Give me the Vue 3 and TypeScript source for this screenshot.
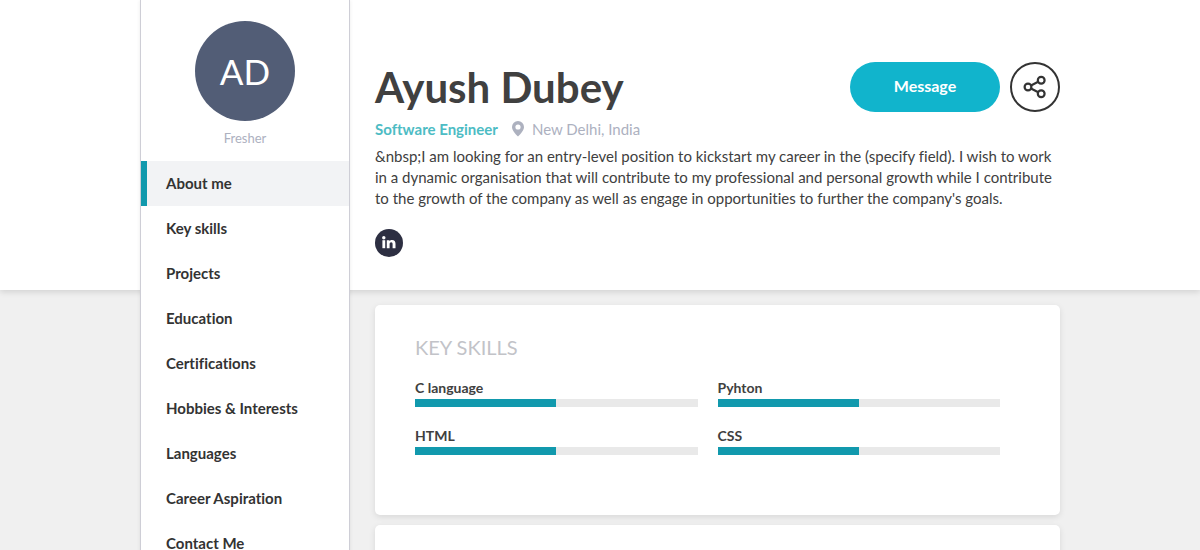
<script setup lang="ts">
import { ref } from 'vue'

interface Section {
  id: string
  label: string
}

interface Skill {
  name: string
  level: number
}

const sections: Section[] = [
  { id: 'about', label: 'About me' },
  { id: 'skills', label: 'Key skills' },
  { id: 'projects', label: 'Projects' },
  { id: 'education', label: 'Education' },
  { id: 'certifications', label: 'Certifications' },
  { id: 'hobbies', label: 'Hobbies & Interests' },
  { id: 'languages', label: 'Languages' },
  { id: 'aspiration', label: 'Career Aspiration' },
  { id: 'contact', label: 'Contact Me' },
]

const skills: Skill[] = [
  { name: 'C language', level: 50 },
  { name: 'Pyhton', level: 50 },
  { name: 'HTML', level: 50 },
  { name: 'CSS', level: 50 },
]

const summary =
  "&nbsp;I am looking for an entry-level position to kickstart my career in the (specify field). I wish to work in a dynamic organisation that will contribute to my professional and personal growth while I contribute to the growth of the company as well as engage in opportunities to further the company's goals."

const active = ref('about')
</script>

<template>
  <div class="page">
    <div class="band"></div>

    <aside class="sidebar">
      <div class="avatar">AD</div>
      <p class="status">Fresher</p>
      <nav>
        <a
          v-for="s in sections"
          :key="s.id"
          :href="'#' + s.id"
          class="nav-link"
          :class="{ active: active === s.id }"
          @click="active = s.id"
          >{{ s.label }}</a
        >
      </nav>
    </aside>

    <header id="about" class="hero">
      <div class="title-row">
        <h1>Ayush Dubey</h1>
        <div class="actions">
          <button type="button" class="message">Message</button>
          <button type="button" class="share" aria-label="Share profile">
            <svg width="24" height="24" viewBox="0 0 24 24" fill="none" stroke="currentColor" stroke-width="2.200">
              <circle cx="5" cy="12" r="3.400" />
              <circle cx="18.200" cy="5.200" r="3.400" />
              <circle cx="18.200" cy="18.800" r="3.400" />
              <path d="M8 10.400 15.200 6.800M8 13.600l7.200 3.600" />
            </svg>
          </button>
        </div>
      </div>
      <div class="meta">
        <span class="role">Software Engineer</span>
        <svg class="pin" width="12" height="16" viewBox="0 0 12 16" aria-hidden="true">
          <path
            fill="currentColor"
            fill-rule="evenodd"
            d="M6 0a6 6 0 0 1 6 6c0 3.400-3.400 7-6 9.500C3.400 13 0 9.400 0 6a6 6 0 0 1 6-6Zm0 3.400a2.600 2.600 0 1 0 0 5.200 2.600 2.600 0 0 0 0-5.200Z"
          />
        </svg>
        <span>New Delhi, India</span>
      </div>
      <p class="summary">{{ summary }}</p>
      <a href="#linkedin" class="linkedin" aria-label="LinkedIn">
        <svg width="28" height="28" viewBox="0 0 28 28">
          <circle cx="14" cy="14" r="14" fill="#2d2f42" />
          <g fill="#fff">
            <circle cx="8.800" cy="8.800" r="1.700" />
            <rect x="7.400" y="11.200" width="2.800" height="8" />
            <path
              d="M11.800 11.200h2.700v1.100c.5-.8 1.400-1.300 2.600-1.300 2.400 0 3.400 1.400 3.400 3.800v4.400h-2.900v-4c0-1.200-.4-1.900-1.400-1.900s-1.600.8-1.600 2v3.900h-2.800Z"
            />
          </g>
        </svg>
      </a>
    </header>

    <main class="content">
      <section id="skills" class="card">
        <h2>KEY SKILLS</h2>
        <ul class="skills">
          <li v-for="s in skills" :key="s.name">
            <span class="skill-name">{{ s.name }}</span>
            <div class="track" role="img" :aria-label="s.name + ' ' + s.level + '%'">
              <div class="fill" :style="{ width: s.level + '%' }"></div>
            </div>
          </li>
        </ul>
      </section>
      <section id="projects" class="card"></section>
    </main>
  </div>
</template>

<style>
body {
  background: #f0f0f0;
}
</style>

<style scoped>
.page,
.page * {
  box-sizing: border-box;
}

.page {
  display: grid;
  grid-template-columns: 1fr 210px minmax(0, 710px) 1fr;
  grid-template-rows: auto 1fr;
  min-height: 100vh;
  font-family: Lato, 'Liberation Sans', sans-serif;
  font-size: 15px;
  font-variant-ligatures: none;
  color: #404040;
}

h1,
h2,
p,
ul {
  margin: 0;
  padding: 0;
}

.band {
  grid-column: 1 / -1;
  grid-row: 1;
  background: #fff;
  box-shadow: 0 2px 6px rgba(0, 0, 0, 0.13);
}

.sidebar {
  grid-column: 2;
  grid-row: 1 / 3;
  z-index: 1;
  padding-top: 21px;
  background: #fff;
  border: 1px solid #ceced6;
  border-width: 0 1px;
  box-shadow: 0 0 4px rgba(0, 0, 0, 0.08);
}

.avatar {
  display: flex;
  align-items: center;
  justify-content: center;
  width: 100px;
  height: 100px;
  margin: 0 auto;
  border-radius: 50%;
  background: #525d76;
  color: #fff;
  font-size: 35px;
}

.status {
  padding: 7px 0 13px;
  text-align: center;
  font-size: 13px;
  line-height: 20px;
  color: #adb1bf;
}

.nav-link {
  display: block;
  padding-left: 19px;
  border-left: 6px solid transparent;
  line-height: 45px;
  font-weight: 700;
  color: #333;
  text-decoration: none;
}

.nav-link.active {
  border-left-color: #1199ad;
  background: #f2f3f5;
}

.hero {
  grid-column: 3;
  grid-row: 1;
  padding: 62px 0 33px 25px;
}

.title-row {
  display: flex;
  align-items: center;
  justify-content: space-between;
}

h1 {
  font-size: 42px;
  line-height: 50px;
  font-weight: 700;
}

.actions {
  display: flex;
  gap: 10px;
}

.message {
  width: 150px;
  height: 50px;
  padding: 0 0 3px;
  border: 0;
  border-radius: 25px;
  background: #11b4cc;
  color: #fff;
  font: inherit;
  font-size: 16px;
  font-weight: 700;
  cursor: pointer;
}

.share {
  display: flex;
  align-items: center;
  justify-content: center;
  width: 50px;
  height: 50px;
  padding: 0;
  border: 2px solid #333;
  border-radius: 50%;
  background: #fff;
  color: #333;
  cursor: pointer;
}

.meta {
  display: flex;
  align-items: center;
  margin-top: 7px;
  line-height: 20px;
  color: #adb1bf;
}

.role {
  font-weight: 700;
  color: #4dbcc4;
}

.pin {
  margin: 0 8px 0 14px;
}

.summary {
  margin-top: 7px;
  line-height: 21px;
}

.linkedin {
  display: block;
  width: 28px;
  height: 28px;
  margin-top: 20px;
}

.linkedin svg {
  display: block;
}

.content {
  grid-column: 3;
  grid-row: 2;
  padding: 15px 0 0 25px;
}

.card {
  min-height: 210px;
  margin-bottom: 10px;
  padding: 30px 60px 30px 40px;
  border-radius: 5px;
  background: #fff;
  box-shadow: 0 2px 6px rgba(0, 0, 0, 0.1);
}

h2 {
  font-size: 20px;
  line-height: 24px;
  font-weight: 400;
  color: #c2c3c8;
}

.skills {
  display: grid;
  grid-template-columns: 1fr 1fr;
  gap: 20px;
  margin-top: 20px;
  list-style: none;
}

.skill-name {
  display: block;
  padding-bottom: 2px;
  font-size: 14px;
  line-height: 18px;
  font-weight: 700;
}

.track {
  height: 8px;
  background: #e9e9e9;
}

.fill {
  height: 100%;
  background: #1199ad;
}
</style>
